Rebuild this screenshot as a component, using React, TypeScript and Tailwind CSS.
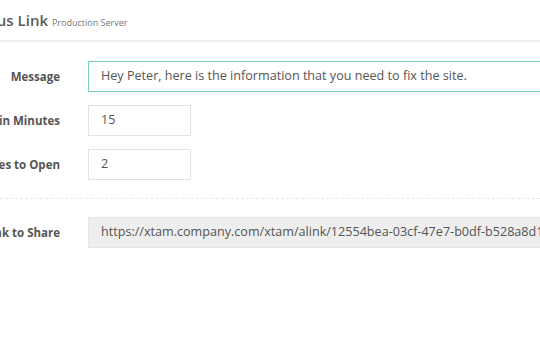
import React from "react";

const rows = [
  { label: "Message", value: "Hey Peter, here is the information that you need to fix the site.", focus: true },
  { label: "Expiration in Minutes", value: "15", focus: false },
  { label: "Number of Times to Open", value: "2", focus: false },
];

export default function App() {
  return (
    <div className="w-[540px] h-[360px] overflow-hidden bg-white text-[#555] font-['Open_Sans',sans-serif]">
      {/* header */}
      <div className="h-[42px] border-b-2 border-[#f0f0f0] flex items-center">
        <h3 className="ml-[-32px] whitespace-nowrap text-[15px] font-semibold text-[#5a5a5a] leading-none">
          Status Link <span className="text-[9px] font-normal text-[#777]">Production Server</span>
        </h3>
      </div>

      {/* form */}
      <div className="pt-[19px] flex flex-col gap-[13px]">
        {rows.map((r) => (
          <div key={r.label} className="flex items-center ml-[-100px]">
            <label className="w-[160px] shrink-0 text-right text-[11.5px] font-bold text-[#555] whitespace-nowrap">
              {r.label}
            </label>
            <div className="pl-[28px] shrink-0">
              <div
                className={`h-[31px] flex items-center px-[12px] text-[12.6px] text-[#555] bg-white whitespace-nowrap overflow-hidden border ${
                  r.focus ? "border-[#76cdb9] w-[500px]" : "border-[#e2e2e2] w-[103px]"
                }`}
              >
                {r.value}
              </div>
            </div>
          </div>
        ))}
      </div>

      <div className="mt-[18px] border-t border-dashed border-[#e8e8e8]" />

      <div className="pt-[18px] flex items-center ml-[-100px]">
        <label className="w-[160px] shrink-0 text-right text-[11.5px] font-bold text-[#555] whitespace-nowrap">
          Link to Share
        </label>
        <div className="pl-[28px] shrink-0">
          <div className="h-[31px] w-[500px] flex items-center px-[12px] text-[12.6px] text-[#555] bg-[#eeeeee] border border-[#e6e6e6] whitespace-nowrap overflow-hidden">
            https://xtam.company.com/xtam/alink/12554bea-03cf-47e7-b0df-b528a8d1e2f4
          </div>
        </div>
      </div>
    </div>
  );
}
